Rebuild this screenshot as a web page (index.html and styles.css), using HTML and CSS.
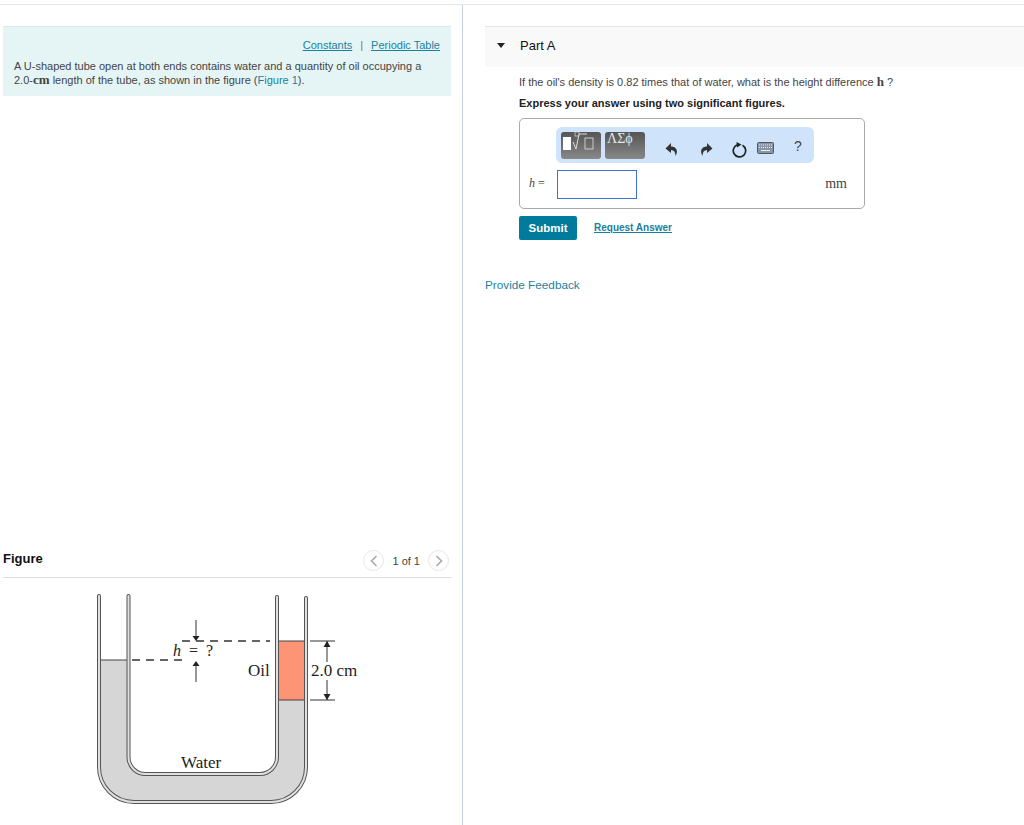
FILE: index.html
```html
<!DOCTYPE html>
<html lang="en">
<head>
  <meta charset="UTF-8">
  <title>Part A</title>
  <link rel="stylesheet" href="styles.css">
</head>
<body>
  <div class="page">
    <div class="left-col">
      <div class="intro">
        <div class="intro-links">
          <a href="#">Constants</a><span class="sep">|</span><a href="#">Periodic Table</a>
        </div>
        <p>A U-shaped tube open at both ends contains water and a quantity of oil occupying a<br>2.0-<b class="math">cm</b> length of the tube, as shown in the figure (<a class="plain" href="#">Figure 1</a>).</p>
      </div>
      <div class="figure-head">
        <h2>Figure</h2>
        <div class="pager">
          <span class="pager-btn"><svg width="8" height="12" viewBox="0 0 8 12"><path d="M6.500 1 1.500 6l5 5" fill="none" stroke="#aaa" stroke-width="1.600"/></svg></span>
          <span class="pager-text">1 of 1</span>
          <span class="pager-btn"><svg width="8" height="12" viewBox="0 0 8 12"><path d="M1.500 1l5 5-5 5" fill="none" stroke="#aaa" stroke-width="1.600"/></svg></span>
        </div>
      </div>
      <svg class="tube" width="290" height="225" viewBox="0 0 290 225">
        <path d="M19 75H48V172A17 17 0 0 0 66 189H180A17 17 0 0 0 197 172V115H226V182A35 35 0 0 1 191 217H54A35 35 0 0 1 19 182Z" fill="#d6d6d6"/>
        <rect x="199" y="56" width="25" height="59" fill="#fd9475"/>
        <path d="M21 75H47M199 56H224M199 115H224" stroke="#444" stroke-width="1"/>
        <g fill="none" stroke-linecap="round">
          <path class="wall" d="M19 11V182A35 35 0 0 0 54 217H191A35 35 0 0 0 226 182V13"/>
          <path class="wall" d="M48.500 11V172A17 17 0 0 0 66 189H180A17 17 0 0 0 197 172V12"/>
          <path class="wall-in" d="M19 11V182A35 35 0 0 0 54 217H191A35 35 0 0 0 226 182V13"/>
          <path class="wall-in" d="M48.500 11V172A17 17 0 0 0 66 189H180A17 17 0 0 0 197 172V12"/>
        </g>
        <path d="M102 56H190M52 75H107" stroke="#333" stroke-width="1.500" stroke-dasharray="8 6" fill="none"/>
        <path d="M116 35V52M116 79V97M247 56V77M247 95V115M230 56H255M230 115H255" stroke="#333" stroke-width="1" fill="none"/>
        <path d="M112.500 51 116 56 119.500 51ZM112.500 81 116 76 119.500 81ZM243.500 62 247 56 250.500 62ZM243.500 109 247 115 250.500 109Z" fill="#222"/>
        <text class="lbl lbl-sm" x="93" y="71" xml:space="preserve"><tspan font-style="italic">h</tspan>  =  ?</text>
        <text class="lbl" x="168" y="91">Oil</text>
        <text class="lbl" x="231" y="91">2.0 cm</text>
        <text class="lbl" x="101" y="183">Water</text>
      </svg>
    </div>

    <div class="right-col">
      <div class="part-head"><span class="caret"></span><span>Part A</span></div>
      <div class="part-body">
        <p class="question">If the oil's density is 0.82 times that of water, what is the height difference <b class="math">h</b> ?</p>
        <p class="express">Express your answer using two significant figures.</p>
        <div class="answer-box">
          <div class="toolbar">
            <span class="tpl-btn">
              <svg width="36" height="20" viewBox="0 0 36 20">
                <rect x="2" y="5" width="8" height="13" fill="#fff"/>
                <path d="M12 10l3 7 3-15h8" fill="none" stroke="#ddd" stroke-width="1"/>
                <rect x="14" y="0" width="4" height="4" fill="none" stroke="#ccc" stroke-width="0.800"/>
                <rect x="24" y="6" width="8" height="11" fill="none" stroke="#ccc" stroke-width="1"/>
              </svg>
            </span>
            <span class="tpl-btn greek">ΛΣϕ</span>
            <span class="tool tool-undo">
              <svg width="13" height="15" viewBox="0 0 13 15"><path d="M6 1 0.500 6.500 6 11V8C9 8 10.500 10 10.500 14 13.500 9 11.500 4.500 6 4.500Z" fill="#333"/></svg>
            </span>
            <span class="tool tool-redo">
              <svg width="13" height="15" viewBox="0 0 13 15"><path d="M7 1 12.500 6.500 7 11V8C4 8 2.500 10 2.500 14-.5 9 1.500 4.500 7 4.500Z" fill="#333"/></svg>
            </span>
            <span class="tool tool-reset">
              <svg width="16" height="16" viewBox="0 0 16 16"><path d="M11.500 3.300A6.200 6.200 0 1 1 7 2.700" fill="none" stroke="#222" stroke-width="1.700"/><path d="M5.500 0 10.500 2.500 6 5.500Z" fill="#222"/></svg>
            </span>
            <span class="tool tool-keys">
              <svg width="17" height="12" viewBox="0 0 17 12"><rect x="0.500" y="0.500" width="16" height="11" rx="1" fill="#8795a5" stroke="#556"/><path d="M2 3h13M2 5.500h13" stroke="#e8eef5" stroke-dasharray="1 1"/><path d="M4 8.500h9" stroke="#e8eef5"/></svg>
            </span>
            <span class="tool tool-help">?</span>
          </div>
          <div class="answer-row">
            <span class="var"><i>h</i> =</span>
            <input class="answer-input" type="text">
            <span class="unit">mm</span>
          </div>
        </div>
        <div class="actions">
          <button class="submit">Submit</button>
          <a class="request" href="#">Request Answer</a>
        </div>
      </div>
      <a class="feedback" href="#">Provide Feedback</a>
    </div>
  </div>
</body>
</html>
```

FILE: styles.css
```css
html, body {
  margin: 0;
  height: 100%;
}
body {
  background: #fff;
  color: #444;
  font-family: 'Liberation Sans', Arial, sans-serif;
  font-size: 11px;
  overflow: hidden;
}
a {
  color: #1b7f9f;
}
.page {
  display: grid;
  grid-template-columns: 463px 1fr;
  height: 820px;
  margin-top: 4px;
  border-top: 1px solid #e6e6e6;
}
.left-col {
  border-right: 1px solid #c3d3e4;
  padding: 21px 11px 0 3px;
}
.intro {
  background: #e5f5f6;
  border-top: 1px solid #dde6ea;
  height: 70px;
  padding: 11px 11px 0;
  box-sizing: border-box;
}
.intro-links {
  text-align: right;
  line-height: 14px;
}
.sep {
  margin: 0 8px;
  color: #777;
}
.intro p {
  margin: 7px 0 0 0;
  line-height: 14px;
}
.plain {
  text-decoration: none;
}
.math {
  font-family: 'Liberation Serif', serif;
  font-size: 13px;
}
.figure-head {
  display: flex;
  justify-content: space-between;
  align-items: center;
  margin-top: 451px;
  height: 30px;
  border-bottom: 1px solid #dcdcdc;
}
.figure-head h2 {
  margin: 0 0 7px;
  font-size: 13px;
  color: #111;
}
.pager {
  display: flex;
  align-items: center;
  gap: 8px;
  margin-right: 2px;
  margin-bottom: 3px;
}
.pager-btn {
  display: flex;
  align-items: center;
  justify-content: center;
  width: 21px;
  height: 21px;
  border: 1px solid #e6e6e6;
  border-radius: 50%;
  box-sizing: border-box;
}
.tube {
  display: block;
  margin: 7px 0 0 77px;
}
.wall {
  stroke: #555;
  stroke-width: 4;
}
.wall-in {
  stroke: #e0e0e0;
  stroke-width: 2;
}
.lbl {
  font-family: 'Liberation Serif', serif;
  font-size: 17px;
  fill: #222;
}
.lbl-sm {
  font-size: 16px;
}
.right-col {
  padding: 21px 0 0 22px;
}
.part-head {
  display: flex;
  align-items: center;
  height: 41px;
  padding-bottom: 3px;
  box-sizing: border-box;
  background: #f9f9f9;
  border-top: 1px solid #e4e4e4;
  font-size: 13px;
  color: #111;
}
.caret {
  width: 0;
  height: 0;
  margin: 0 15px 0 12px;
  border-left: 4.500px solid transparent;
  border-right: 4.500px solid transparent;
  border-top: 5px solid #222;
}
.part-body {
  padding: 7px 0 0 34px;
}
.question {
  margin: 0;
  line-height: 15px;
}
.express {
  margin: 6px 0 0;
  line-height: 15px;
  font-weight: bold;
  color: #222;
}
.answer-box {
  width: 346px;
  height: 91px;
  margin-top: 7px;
  border: 1px solid #aaa;
  border-radius: 5px;
  box-sizing: border-box;
}
.toolbar {
  display: flex;
  align-items: flex-start;
  width: 258px;
  height: 36px;
  margin: 8px 0 0 36px;
  padding: 5px 5px;
  background: #cfe4fb;
  border-radius: 6px;
  box-sizing: border-box;
  position: relative;
}
.tpl-btn {
  display: block;
  width: 40px;
  height: 27px;
  margin-right: 4px;
  background: linear-gradient(#555, #888);
  border-radius: 3px;
}
.greek {
  padding-left: 2px;
  box-sizing: border-box;
  color: #e8e8e8;
  font-family: 'Liberation Serif', serif;
  font-size: 14px;
  line-height: 14px;
}
.tool {
  position: absolute;
  color: #444;
}
.tool-undo { left: 109px; top: 15px; }
.tool-redo { left: 144px; top: 15px; }
.tool-reset { left: 175px; top: 15px; }
.tool-keys { left: 201px; top: 15px; }
.tool-help { left: 238px; top: 11px; font-size: 14px; }
.answer-row {
  display: flex;
  align-items: center;
  margin-top: 7px;
  padding-left: 9px;
}
.var {
  width: 28px;
  margin-bottom: 2px;
  font-family: 'Liberation Serif', serif;
  font-size: 12px;
}
.answer-input {
  width: 80px;
  height: 29px;
  padding: 0;
  border: 1px solid #3f6fd8;
  box-sizing: border-box;
  outline: none;
}
.unit {
  margin-left: auto;
  margin-right: 17px;
  margin-bottom: 2px;
  font-family: 'Liberation Serif', serif;
  font-size: 14px;
}
.actions {
  display: flex;
  align-items: center;
  margin-top: 7px;
}
.submit {
  width: 58px;
  height: 24px;
  padding: 0;
  border: none;
  border-radius: 2px;
  background: #007b9c;
  color: #fff;
  font-family: 'Liberation Sans', Arial, sans-serif;
  font-size: 11.500px;
  font-weight: bold;
}
.request {
  margin-left: 17px;
  margin-bottom: 1px;
  font-size: 10px;
  font-weight: bold;
}
.feedback {
  display: block;
  margin-top: 38px;
  text-decoration: none;
  font-size: 11.750px;
}
```
